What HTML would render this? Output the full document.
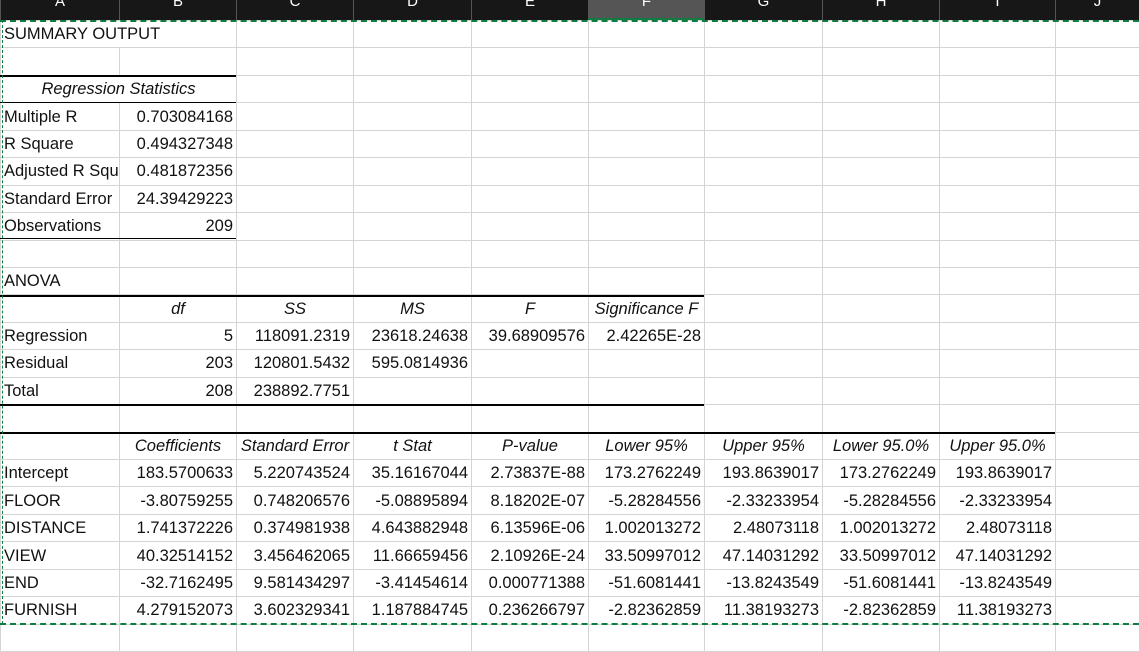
<!DOCTYPE html>
<html><head><meta charset="utf-8"><style>
body{margin:0;width:1139px;height:650px;overflow:hidden;background:#fff;font-family:"Liberation Sans",sans-serif;position:relative}
.hdr{position:absolute;top:0;left:0;width:1139px;height:20px;background:#171717}
.hdr div{position:absolute;top:0;height:20px;color:#fff;font-size:15px;line-height:10px;text-align:center;border-left:1px solid #555;box-sizing:border-box;overflow:hidden}
.hdr span{position:relative;top:-3px}
table{position:absolute;top:20px;left:0;border-collapse:collapse;table-layout:fixed;width:1139px}
tr{height:27.45px}
td{height:27.45px;padding:0 3px;border:1px solid #d4d4d4;font-size:16.5px;white-space:nowrap;overflow:hidden;box-sizing:border-box;color:#111;line-height:26px}
td.r{text-align:right}
td.c{text-align:center;font-style:italic}
.ln{position:absolute;background:#000}
</style></head><body>
<div class="hdr">
<div style="left:0;width:119px"><span>A</span></div><div style="left:119px;width:117px"><span>B</span></div><div style="left:236px;width:117px"><span>C</span></div><div style="left:353px;width:118px"><span>D</span></div><div style="left:471px;width:117px"><span>E</span></div><div style="left:588px;width:116px;background:#555"><span>F</span></div><div style="left:704px;width:118px"><span>G</span></div><div style="left:822px;width:117px"><span>H</span></div><div style="left:939px;width:116px"><span>I</span></div><div style="left:1055px;width:84px"><span>J</span></div>
</div>
<div style="position:absolute;left:588px;top:18px;width:116px;height:3px;background:#107c41"></div>
<table>
<colgroup><col style="width:119px"><col style="width:117px"><col style="width:117px"><col style="width:118px"><col style="width:117px"><col style="width:116px"><col style="width:118px"><col style="width:117px"><col style="width:116px"><col style="width:84px"></colgroup>
<tr><td colspan="2">SUMMARY OUTPUT</td><td></td><td></td><td></td><td></td><td></td><td></td><td></td><td></td></tr>
<tr><td></td><td></td><td></td><td></td><td></td><td></td><td></td><td></td><td></td><td></td></tr>
<tr><td colspan="2" class="c">Regression Statistics</td><td></td><td></td><td></td><td></td><td></td><td></td><td></td><td></td></tr>
<tr><td>Multiple R</td><td class="r">0.703084168</td><td></td><td></td><td></td><td></td><td></td><td></td><td></td><td></td></tr>
<tr><td>R Square</td><td class="r">0.494327348</td><td></td><td></td><td></td><td></td><td></td><td></td><td></td><td></td></tr>
<tr><td>Adjusted R Square</td><td class="r">0.481872356</td><td></td><td></td><td></td><td></td><td></td><td></td><td></td><td></td></tr>
<tr><td>Standard Error</td><td class="r">24.39429223</td><td></td><td></td><td></td><td></td><td></td><td></td><td></td><td></td></tr>
<tr><td>Observations</td><td class="r">209</td><td></td><td></td><td></td><td></td><td></td><td></td><td></td><td></td></tr>
<tr><td></td><td></td><td></td><td></td><td></td><td></td><td></td><td></td><td></td><td></td></tr>
<tr><td>ANOVA</td><td></td><td></td><td></td><td></td><td></td><td></td><td></td><td></td><td></td></tr>
<tr><td></td><td class="c">df</td><td class="c">SS</td><td class="c">MS</td><td class="c">F</td><td class="c">Significance F</td><td></td><td></td><td></td><td></td></tr>
<tr><td>Regression</td><td class="r">5</td><td class="r">118091.2319</td><td class="r">23618.24638</td><td class="r">39.68909576</td><td class="r">2.42265E-28</td><td></td><td></td><td></td><td></td></tr>
<tr><td>Residual</td><td class="r">203</td><td class="r">120801.5432</td><td class="r">595.0814936</td><td></td><td></td><td></td><td></td><td></td><td></td></tr>
<tr><td>Total</td><td class="r">208</td><td class="r">238892.7751</td><td></td><td></td><td></td><td></td><td></td><td></td><td></td></tr>
<tr><td></td><td></td><td></td><td></td><td></td><td></td><td></td><td></td><td></td><td></td></tr>
<tr><td></td><td class="c">Coefficients</td><td class="c">Standard Error</td><td class="c">t Stat</td><td class="c">P-value</td><td class="c">Lower 95%</td><td class="c">Upper 95%</td><td class="c">Lower 95.0%</td><td class="c">Upper 95.0%</td><td></td></tr>
<tr><td>Intercept</td><td class="r">183.5700633</td><td class="r">5.220743524</td><td class="r">35.16167044</td><td class="r">2.73837E-88</td><td class="r">173.2762249</td><td class="r">193.8639017</td><td class="r">173.2762249</td><td class="r">193.8639017</td><td></td></tr>
<tr><td>FLOOR</td><td class="r">-3.80759255</td><td class="r">0.748206576</td><td class="r">-5.08895894</td><td class="r">8.18202E-07</td><td class="r">-5.28284556</td><td class="r">-2.33233954</td><td class="r">-5.28284556</td><td class="r">-2.33233954</td><td></td></tr>
<tr><td>DISTANCE</td><td class="r">1.741372226</td><td class="r">0.374981938</td><td class="r">4.643882948</td><td class="r">6.13596E-06</td><td class="r">1.002013272</td><td class="r">2.48073118</td><td class="r">1.002013272</td><td class="r">2.48073118</td><td></td></tr>
<tr><td>VIEW</td><td class="r">40.32514152</td><td class="r">3.456462065</td><td class="r">11.66659456</td><td class="r">2.10926E-24</td><td class="r">33.50997012</td><td class="r">47.14031292</td><td class="r">33.50997012</td><td class="r">47.14031292</td><td></td></tr>
<tr><td>END</td><td class="r">-32.7162495</td><td class="r">9.581434297</td><td class="r">-3.41454614</td><td class="r">0.000771388</td><td class="r">-51.6081441</td><td class="r">-13.8243549</td><td class="r">-51.6081441</td><td class="r">-13.8243549</td><td></td></tr>
<tr><td>FURNISH</td><td class="r">4.279152073</td><td class="r">3.602329341</td><td class="r">1.187884745</td><td class="r">0.236266797</td><td class="r">-2.82362859</td><td class="r">11.38193273</td><td class="r">-2.82362859</td><td class="r">11.38193273</td><td></td></tr>
<tr><td></td><td></td><td></td><td></td><td></td><td></td><td></td><td></td><td></td><td></td></tr>
</table>
<div class="ln" style="left:0;top:75px;width:236px;height:2px"></div>
<div class="ln" style="left:0;top:102px;width:236px;height:1px"></div>
<div class="ln" style="left:0;top:238px;width:236px;height:1px"></div>
<div class="ln" style="left:0;top:295px;width:704px;height:2px"></div>
<div class="ln" style="left:0;top:404px;width:704px;height:2px"></div>
<div class="ln" style="left:0;top:432px;width:1055px;height:2px"></div>
<div style="position:absolute;left:0;top:20px;width:1139px;height:0;border-top:2px dashed #107c41"></div>
<div style="position:absolute;left:0;top:623px;width:1139px;height:0;border-top:2px dashed #107c41"></div>
<div style="position:absolute;left:2px;top:20px;width:0;height:604px;border-left:1px dashed #107c41"></div>
</body></html>
